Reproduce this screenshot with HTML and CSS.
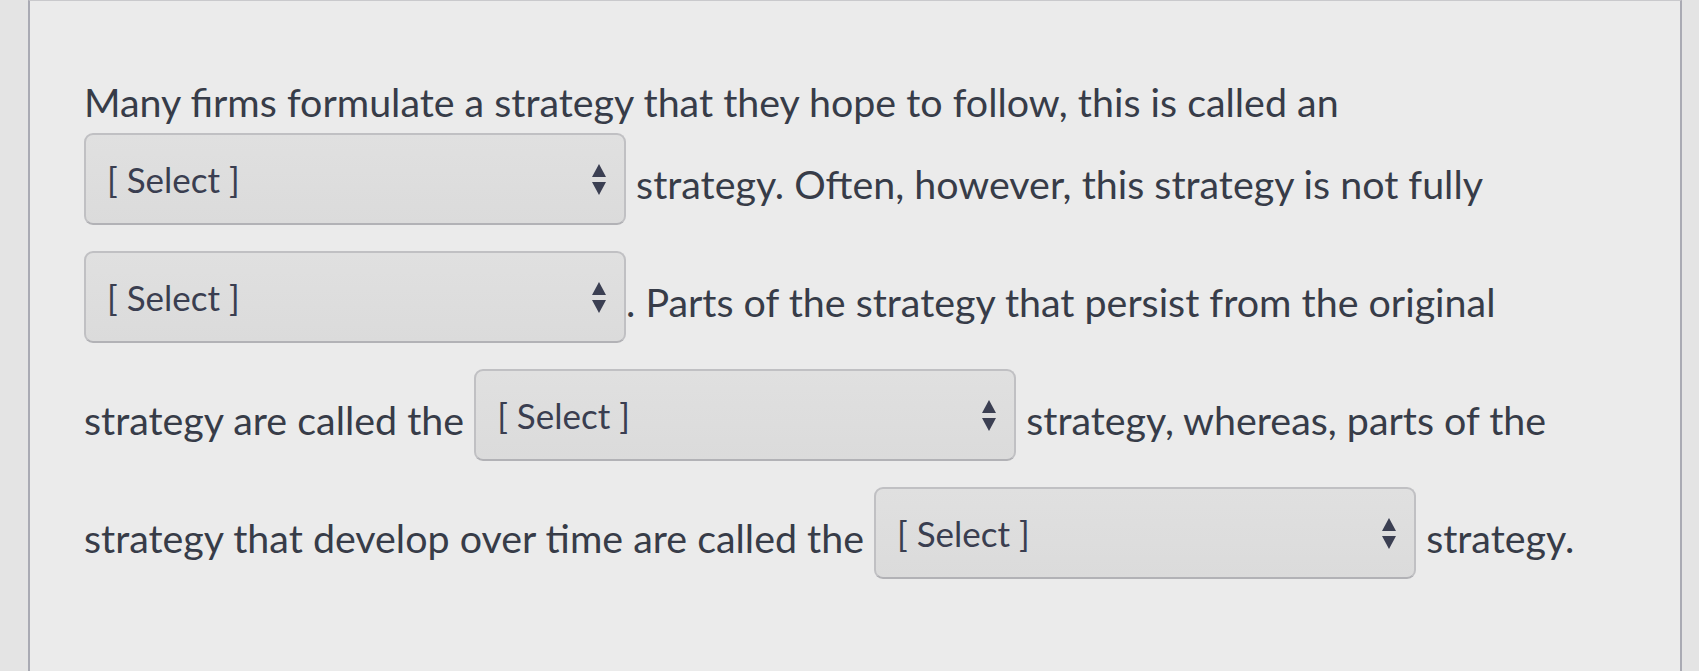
FILE: index.html
```html
<!DOCTYPE html>
<html lang="en">
<head>
<meta charset="utf-8">
<title>Question</title>
<link rel="stylesheet" href="styles.css">
</head>
<body>
<div class="panel">
  <p class="question">Many firms formulate a strategy that they hope to follow, this is called an <span class="select"><span class="select-label">[ Select ]</span><span class="arrows"><span class="up"></span><span class="down"></span></span></span> strategy. Often, however, this strategy is not fully <span class="select"><span class="select-label">[ Select ]</span><span class="arrows"><span class="up"></span><span class="down"></span></span></span>. Parts of the strategy that persist from the original strategy are called the <span class="select"><span class="select-label">[ Select ]</span><span class="arrows"><span class="up"></span><span class="down"></span></span></span> strategy, whereas, parts of the strategy that develop over time are called the <span class="select"><span class="select-label">[ Select ]</span><span class="arrows"><span class="up"></span><span class="down"></span></span></span> strategy.</p>
</div>
</body>
</html>
```
FILE: styles.css
```css
html, body {
  margin: 0;
  padding: 0;
  height: 100%;
  background: #e4e4e4;
}
body {
  font-family: Lato, "Noto Sans", sans-serif;
  color: #373c48;
}
.panel {
  margin: 0 17px 0 28px;
  height: 100%;
  box-sizing: border-box;
  background: #ebebeb;
  border-left: 2px solid #a9aab3;
  border-right: 2px solid #a9aab3;
  border-top: 1px solid #c9c9cc;
  padding: 79px 80px 0 54px;
}
.question {
  margin: 0;
  font-size: 39.4px;
  line-height: 1.1;
}
.select {
  display: inline-flex;
  align-items: center;
  justify-content: space-between;
  box-sizing: border-box;
  width: 542px;
  height: 92px;
  margin: 10px 0 16px;
  padding: 0 18px 0 21px;
  vertical-align: 6px;
  border: 2px solid #c0c0c3;
  border-bottom-color: #b2b2b6;
  border-radius: 9px;
  background: linear-gradient(#e0e0e0, #dbdbdb);
  font-size: 35px;
  color: #3a3e50;
}
.arrows {
  display: flex;
  flex-direction: column;
  align-items: center;
  gap: 5px;
}
.up, .down {
  width: 0;
  height: 0;
  border-left: 7px solid transparent;
  border-right: 7px solid transparent;
}
.up {
  border-bottom: 13px solid #3b3f52;
}
.down {
  border-top: 13px solid #3b3f52;
}
```
